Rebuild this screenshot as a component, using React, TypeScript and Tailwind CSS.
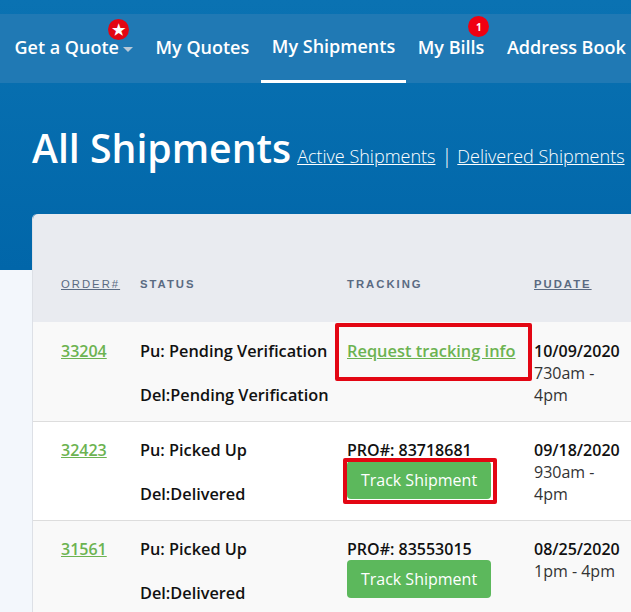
import React from "react";

function Nav({ label, active, children }: { label: string; active?: boolean; children?: React.ReactNode }) {
  return (
    <div className={`relative flex h-full items-center px-[11.3px] pb-[2px] text-[18px] font-semibold whitespace-nowrap text-white ${active ? "border-b-[3px] border-white" : ""}`}>
      {label}
      {children}
    </div>
  );
}

function Row({ order, pu, del, tracking, date, time, alt, h }: { order: string; pu: string; del: string; tracking: React.ReactNode; date: string; time: React.ReactNode; alt?: boolean; h: string }) {
  return (
    <div className={`grid grid-cols-[79px_207px_187px_1fr] border-b border-[#dddddd] pl-[28px] text-[16px] leading-[22px] text-[#111] ${alt ? "bg-[#f9f9f9]" : "bg-white"} ${h}`}>
      <div className="pt-[17px]">
        <a className="font-semibold text-[#6cb351] underline">{order}</a>
      </div>
      <div className="pt-[17px] text-[16.3px] font-semibold whitespace-nowrap">
        <div>{pu}</div>
        <div className="mt-[22px]">{del}</div>
      </div>
      <div className="pt-[17px]">{tracking}</div>
      <div className="pt-[17px] whitespace-nowrap">
        <div className="font-semibold">{date}</div>
        <div className="w-[90px] text-[#333]">{time}</div>
      </div>
    </div>
  );
}

function Track() {
  return (
    <div className="flex h-[38px] w-[144px] items-center justify-center rounded bg-[#5cb85c] text-[16px] text-white">Track Shipment</div>
  );
}

export default function App() {
  return (
    <div className="h-[612px] w-[631px] overflow-hidden bg-[#f3f7fc] font-['Open_Sans',sans-serif]">
      <div className="h-[270px] bg-gradient-to-b from-[#0a72b2] to-[#0166a9] pt-[14px]">
        <div className="relative flex h-[69px] items-stretch bg-[#2079b4] pl-[3.2px]">
          <Nav label="Get a Quote">
            <span className="ml-[4px] mt-[4px] h-0 w-0 border-x-[5.5px] border-t-[5px] border-x-transparent border-t-[#b9c9d8]" />
            <span className="absolute left-[105px] top-[5px] flex h-[21px] w-[21px] items-center justify-center rounded-full bg-[#e30613] text-[15px] leading-none text-white">★</span>
          </Nav>
          <Nav label="My Quotes" />
          <Nav label="My Shipments" active />
          <Nav label="My Bills">
            <span className="absolute left-[62px] top-[2px] flex h-[21px] w-[21px] items-center justify-center rounded-full bg-[#f00011] text-[10px] font-bold leading-none text-white">1</span>
          </Nav>
          <Nav label="Address Book" />
        </div>
        <div className="flex items-baseline pl-[32px] pt-[37px]">
          <h1 className="text-[39.2px] font-semibold leading-[56px] text-white">All Shipments</h1>
          <div className="ml-[6px] flex items-baseline text-[18px] font-light whitespace-nowrap text-white">
            <a className="underline">Active Shipments</a>
            <span className="ml-[6px] mr-[5px] text-[20px]">|</span>
            <a className="underline">Delivered Shipments</a>
          </div>
        </div>
      </div>
      <div className="relative z-10 ml-[32px] mt-[-56px] w-[640px] rounded-t-[5px] border-l border-[#dde0e6]">
        <div className="grid h-[108px] grid-cols-[79px_207px_187px_1fr] items-start rounded-t-[5px] bg-[#e9ebf0] pl-[28px] pt-[63px] font-['Liberation_Sans',sans-serif] text-[11.3px] leading-[14px] tracking-[2px] text-[#5a6a82]">
          <a className="justify-self-start underline">ORDER#</a>
          <span className="font-bold">STATUS</span>
          <span className="font-bold">TRACKING</span>
          <a className="justify-self-start font-bold underline">PUDATE</a>
        </div>
        <Row
          h="h-[100px] pt-[1px]"
          alt
          order="33204"
          pu="Pu: Pending Verification"
          del="Del:Pending Verification"
          date="10/09/2020"
          time={<>730am -<br />4pm</>}
          tracking={
            <div className="relative">
              <a className="text-[16.4px] font-semibold text-[#6cb351] underline">Request tracking info</a>
              <span className="absolute left-[-12px] top-[-17px] h-[58px] w-[197px] rounded-[2px] border-[4px] border-[#e30613]" />
            </div>
          }
        />
        <Row
          h="h-[99px]"
          order="32423"
          pu="Pu: Picked Up"
          del="Del:Delivered"
          date="09/18/2020"
          time={<>930am -<br />4pm</>}
          tracking={
            <div className="relative font-semibold">
              PRO#: 83718681
              <div className="font-normal"><Track /></div>
              <span className="absolute left-[-4px] top-[19px] h-[46px] w-[154px] rounded-[2px] border-[4px] border-[#e30613]" />
            </div>
          }
        />
        <Row
          h="h-[99px]"
          alt
          order="31561"
          pu="Pu: Picked Up"
          del="Del:Delivered"
          date="08/25/2020"
          time="1pm - 4pm"
          tracking={
            <div className="font-semibold">
              PRO#: 83553015
              <div className="font-normal"><Track /></div>
            </div>
          }
        />
      </div>
    </div>
  );
}
